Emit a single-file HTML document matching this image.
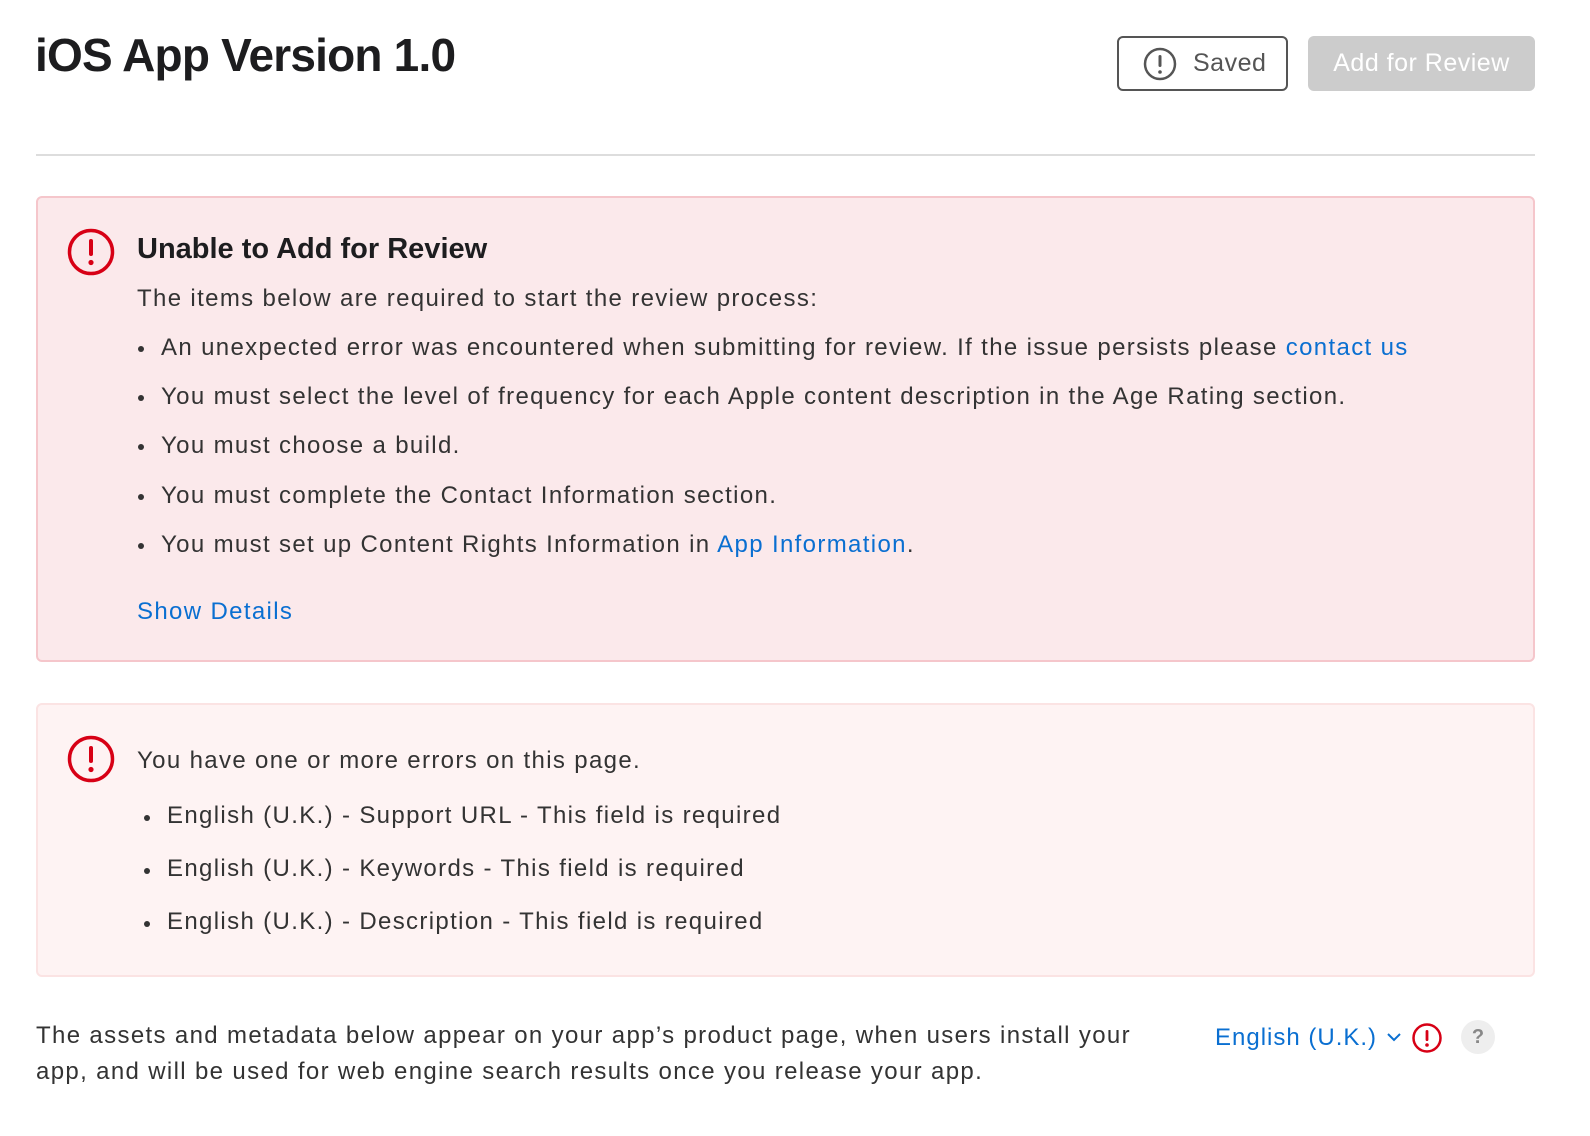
<!DOCTYPE html>
<html><head><meta charset="utf-8"><style>
*{margin:0;padding:0;box-sizing:border-box}
body{width:1590px;height:1136px;background:#fff;font-family:"Liberation Sans",sans-serif;color:#333;position:relative;overflow:hidden}
.a{position:absolute;white-space:nowrap}
h1{position:absolute;left:35px;top:28px;font-size:46px;font-weight:700;color:#1d1d1f;letter-spacing:-0.8px}
.btn{position:absolute;top:36px;height:55px;border-radius:6px;font-size:25px;display:flex;align-items:center;letter-spacing:0.5px}
.box{position:absolute;left:36px;width:1499px;border-radius:6px}
.t{font-size:24px;color:#333;letter-spacing:1.35px}
.l{color:#0a6fd1}
.dot{position:absolute;width:6px;height:6px;border-radius:50%;background:#333}
</style></head><body>
<h1>iOS App Version 1.0</h1>
<div class="btn" style="left:1117px;width:171px;border:2px solid #555;color:#555">
<svg style="margin-left:24px" width="34" height="34" viewBox="0 0 34 34"><circle cx="17" cy="17" r="15" fill="none" stroke="#555" stroke-width="2.5"/><rect x="15.5" y="8" width="3" height="12" rx="1.5" fill="#555"/><circle cx="17" cy="25" r="1.8" fill="#555"/></svg>
<span style="margin-left:16px">Saved</span></div>
<div class="btn" style="left:1308px;width:227px;background:#ccc;color:#fff;justify-content:center">Add for Review</div>
<div class="a" style="left:36px;top:154px;width:1499px;height:2px;background:#ddd"></div>

<div class="box" style="top:196px;height:466px;background:#fbe9eb;border:2px solid #f5c6cb"></div>
<svg class="a" style="left:67px;top:228px" width="48" height="48" viewBox="0 0 48 48"><circle cx="24" cy="24" r="21.5" fill="none" stroke="#d70015" stroke-width="3.5"/><rect x="22" y="11" width="4" height="17" rx="2" fill="#d70015"/><circle cx="24" cy="34.5" r="2.6" fill="#d70015"/></svg>
<div class="a" style="left:137px;top:233px;font-size:29px;font-weight:700;color:#1d1d1f">Unable to Add for Review</div>
<div class="a t" style="left:137px;top:285px">The items below are required to start the review process:</div>
<div class="dot" style="left:138px;top:346px"></div><div class="a t" style="left:161px;top:334px">An unexpected error was encountered when submitting for review. If the issue persists please <span class="l">contact us</span></div>
<div class="dot" style="left:138px;top:395px"></div><div class="a t" style="left:161px;top:383px">You must select the level of frequency for each Apple content description in the Age Rating section.</div>
<div class="dot" style="left:138px;top:444px"></div><div class="a t" style="left:161px;top:432px">You must choose a build.</div>
<div class="dot" style="left:138px;top:494px"></div><div class="a t" style="left:161px;top:482px">You must complete the Contact Information section.</div>
<div class="dot" style="left:138px;top:543px"></div><div class="a t" style="left:161px;top:531px">You must set up Content Rights Information in <span class="l">App Information</span>.</div>
<div class="a t l" style="left:137px;top:598px">Show Details</div>

<div class="box" style="top:703px;height:274px;background:#fef3f3;border:2px solid #fbe3e3"></div>
<svg class="a" style="left:67px;top:735px" width="48" height="48" viewBox="0 0 48 48"><circle cx="24" cy="24" r="21.5" fill="none" stroke="#d70015" stroke-width="3.5"/><rect x="22" y="11" width="4" height="17" rx="2" fill="#d70015"/><circle cx="24" cy="34.5" r="2.6" fill="#d70015"/></svg>
<div class="a t" style="left:137px;top:747px">You have one or more errors on this page.</div>
<div class="dot" style="left:144px;top:815px"></div><div class="a t" style="left:167px;top:802px">English (U.K.) - Support URL - This field is required</div>
<div class="dot" style="left:144px;top:868px"></div><div class="a t" style="left:167px;top:855px">English (U.K.) - Keywords - This field is required</div>
<div class="dot" style="left:144px;top:921px"></div><div class="a t" style="left:167px;top:908px">English (U.K.) - Description - This field is required</div>

<div class="a t" style="left:36px;top:1018px;line-height:36px">The assets and metadata below appear on your app’s product page, when users install your<br>app, and will be used for web engine search results once you release your app.</div>
<div class="a t l" style="left:1215px;top:1024px;letter-spacing:1px">English (U.K.)</div>
<svg class="a" style="left:1386px;top:1031px" width="16" height="12" viewBox="0 0 16 12"><path d="M2 3l6 6 6-6" fill="none" stroke="#0a6fd1" stroke-width="2"/></svg>
<svg class="a" style="left:1411px;top:1022px" width="32" height="32" viewBox="0 0 32 32"><circle cx="16" cy="16" r="13.5" fill="none" stroke="#d70015" stroke-width="2.5"/><rect x="14.6" y="8" width="2.8" height="11" rx="1.4" fill="#d70015"/><circle cx="16" cy="23" r="1.8" fill="#d70015"/></svg>
<div class="a" style="left:1461px;top:1020px;width:34px;height:34px;border-radius:50%;background:#eee;color:#888;font-size:20px;font-weight:700;text-align:center;line-height:34px">?</div>
</body></html>
